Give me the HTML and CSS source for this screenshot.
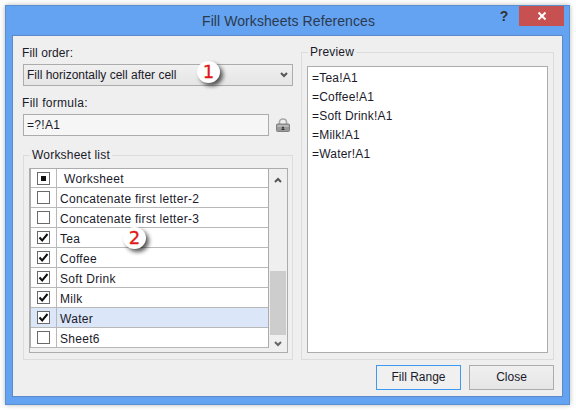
FILE: index.html
```html
<!DOCTYPE html>
<html lang="en">
<head>
<meta charset="utf-8">
<title>Fill Worksheets References</title>
<link rel="stylesheet" href="styles.css">
</head>
<body>
<div class="window">
  <div class="titlebar">
    <div class="title">Fill Worksheets References</div>
    <div class="help">?</div>
    <div class="close"><svg width="10" height="10" viewBox="0 0 10 10"><path d="M1.500 1.500 8.500 8.500M8.500 1.500 1.500 8.500" stroke="#fff" stroke-width="2" fill="none"/></svg></div>
  </div>
  <div class="client">
    <div class="columns">
      <div class="left">
        <div class="label">Fill order:</div>
        <div class="select">
          <span>Fill horizontally cell after cell</span>
          <svg class="chev" width="8" height="6" viewBox="0 0 8 6"><path d="M1 1 4 4 7 1" stroke="#555" stroke-width="2" fill="none"/></svg>
        </div>
        <div class="label formula-label">Fill formula:</div>
        <div class="formula-row">
          <div class="input">=?!A1</div>
          <svg class="lock" width="14" height="14" viewBox="0 0 14 14">
            <path d="M3.500 6.500V4.200C3.500 2.200 5 1 7 1s3.500 1.200 3.500 3.200V6.500" fill="none" stroke="#a8a8a8" stroke-width="1.600"/>
            <rect x="0.500" y="6" width="13" height="7.500" rx="1" fill="#9a9a9a" stroke="#808080"/>
            <rect x="1.500" y="7" width="11" height="2" fill="#b8b8b8"/>
            <path d="M7 8.500v3M5.500 11.500h3M5.800 9.800h2.400" stroke="#333" stroke-width="1" fill="none"/>
          </svg>
        </div>
        <fieldset class="group list-group">
          <legend>Worksheet list</legend>
          <div class="list">
            <div class="grid">
              <div class="row head">
                <div class="cell-check"><span class="box"><span class="mixed"></span></span></div>
                <div class="cell-name">Worksheet</div>
              </div>
              <div class="row">
                <div class="cell-check"><span class="box"></span></div>
                <div class="cell-name">Concatenate first letter-2</div>
              </div>
              <div class="row">
                <div class="cell-check"><span class="box"></span></div>
                <div class="cell-name">Concatenate first letter-3</div>
              </div>
              <div class="row">
                <div class="cell-check"><span class="box"><svg width="11" height="11" viewBox="0 0 11 11"><path d="M1.500 5.500 4.200 8.500 9.500 2" stroke="#111" stroke-width="2" fill="none"/></svg></span></div>
                <div class="cell-name">Tea</div>
              </div>
              <div class="row">
                <div class="cell-check"><span class="box"><svg width="11" height="11" viewBox="0 0 11 11"><path d="M1.500 5.500 4.200 8.500 9.500 2" stroke="#111" stroke-width="2" fill="none"/></svg></span></div>
                <div class="cell-name">Coffee</div>
              </div>
              <div class="row">
                <div class="cell-check"><span class="box"><svg width="11" height="11" viewBox="0 0 11 11"><path d="M1.500 5.500 4.200 8.500 9.500 2" stroke="#111" stroke-width="2" fill="none"/></svg></span></div>
                <div class="cell-name">Soft Drink</div>
              </div>
              <div class="row">
                <div class="cell-check"><span class="box"><svg width="11" height="11" viewBox="0 0 11 11"><path d="M1.500 5.500 4.200 8.500 9.500 2" stroke="#111" stroke-width="2" fill="none"/></svg></span></div>
                <div class="cell-name">Milk</div>
              </div>
              <div class="row selected">
                <div class="cell-check"><span class="box"><svg width="11" height="11" viewBox="0 0 11 11"><path d="M1.500 5.500 4.200 8.500 9.500 2" stroke="#111" stroke-width="2" fill="none"/></svg></span></div>
                <div class="cell-name">Water</div>
              </div>
              <div class="row">
                <div class="cell-check"><span class="box"></span></div>
                <div class="cell-name">Sheet6</div>
              </div>
            </div>
            <div class="scrollbar">
              <svg width="8" height="6" viewBox="0 0 8 6"><path d="M1 5 4 2 7 5" stroke="#555" stroke-width="2" fill="none"/></svg>
              <div class="track"><div class="thumb"></div></div>
              <svg width="8" height="6" viewBox="0 0 8 6"><path d="M1 1 4 4 7 1" stroke="#666" stroke-width="2" fill="none"/></svg>
            </div>
          </div>
        </fieldset>
      </div>
      <fieldset class="group preview-group">
        <legend>Preview</legend>
        <div class="preview">
          <div>=Tea!A1</div>
          <div>=Coffee!A1</div>
          <div>=Soft Drink!A1</div>
          <div>=Milk!A1</div>
          <div>=Water!A1</div>
        </div>
      </fieldset>
    </div>
    <div class="buttons">
      <div class="btn primary">Fill Range</div>
      <div class="btn">Close</div>
    </div>
    <div class="badge badge-one">1</div>
    <div class="badge badge-two">2</div>
  </div>
</div>
</body>
</html>
```
FILE: styles.css
```css
* { box-sizing: border-box; }
html, body { margin: 0; background: #fff; }
body { width: 576px; height: 410px; overflow: hidden; padding: 5px 0 0 5px; font: 12px/16px "Liberation Sans", Arial, sans-serif; color: #1a1a2a; }
.window { width: 565px; height: 400px; background: #64a2f2; border: 1px solid #5c8fd0; box-shadow: 0 0 5px rgba(0,0,0,.28); display: flex; flex-direction: column; }
.titlebar { height: 29px; position: relative; flex: none; }
.title { text-align: center; font-size: 14px; letter-spacing: .08px; line-height: 30px; padding-left: 2px; color: #2b3a4d; }
.help { position: absolute; left: 491px; top: 0; width: 14px; font-size: 14px; font-weight: 700; line-height: 20px; text-align: center; color: #333; }
.close { position: absolute; right: 5px; top: 0; width: 45px; height: 20px; background: #c75050; display: flex; align-items: center; justify-content: center; }
.client { position: relative; flex: 1; margin: 0 6px 7px 6px; background: #efefef; border: 1px solid #5c8ac8; padding: 8px 8px 0 10px; }
.columns { display: flex; gap: 8px; height: 316px; }
.left { width: 270px; display: flex; flex-direction: column; }
.label { height: 16px; line-height: 18px; margin-left: -1px; letter-spacing: .1px; }
.select { height: 22px; margin-top: 4px; border: 1px solid #acacac; background: linear-gradient(#f0f0f0, #e5e5e5); display: flex; align-items: center; justify-content: space-between; padding: 0 3px 0 3px; }
.chev { margin-right: 1px; }
.formula-label { margin-top: 8px; letter-spacing: .3px; }
.formula-row { display: flex; align-items: center; margin-top: 4px; height: 22px; }
.input { width: 246px; height: 22px; border: 1px solid #acacac; background: #f6f6f6; padding-left: 3px; line-height: 20px; letter-spacing: .3px; }
.lock { margin-left: 7px; }
.group { margin: 0; padding: 0; border: 1px solid #dcdcdc; min-width: 0; }
.group legend { margin-left: 1px; padding: 0 2px; line-height: 16px; letter-spacing: .2px; }
.list-group { margin-top: 11px; height: 213px; padding: 5px 4px 0 5px; }
.list { height: 185px; border: 1px solid #acacac; display: flex; background: #efefef; }
.grid { width: 240px; height: 179px; background: #fff; border-left: 1px solid #acacac; border-right: 1px solid #acacac; }
.row { height: 20px; display: flex; border-bottom: 1px solid #b8b8b8; }
.row.head { height: 19px; }
.row.selected { background: #dce6f9; }
.cell-check { width: 26px; flex: none; border-right: 1px solid #b8b8b8; display: flex; align-items: center; justify-content: center; }
.cell-name { flex: 1; padding-left: 3px; line-height: 22px; height: 19px; white-space: nowrap; letter-spacing: .3px; }
.head .cell-name { padding-left: 7px; line-height: 20px; height: 18px; }
.box { width: 13px; height: 13px; border: 1px solid #6a6a6a; background: #fff; display: flex; align-items: center; justify-content: center; }
.mixed { width: 5px; height: 5px; background: #111; }
.scrollbar { width: 18px; flex: none; display: flex; flex-direction: column; align-items: center; padding-top: 8px; }
.track { width: 100%; height: 150px; flex: none; display: flex; flex-direction: column; justify-content: flex-end; margin: 2px 0 6px; padding: 0 1px; }
.thumb { height: 64px; background: #cdcdcd; }
.preview-group { width: 253px; height: 316px; padding: 6px 5px 0 5px; }
.preview { height: 287px; border: 1px solid #acacac; background: #fff; padding: 2px 4px; line-height: 19px; letter-spacing: .2px; }
.buttons { display: flex; justify-content: flex-end; gap: 8px; margin-top: 5px; }
.btn { width: 85px; height: 25px; border: 1px solid #acacac; background: linear-gradient(#f0f0f0, #e5e5e5); text-align: center; line-height: 23px; }
.btn.primary { border-color: #3c9bf0; background: #f0f0f0; }
.badge { position: absolute; width: 23px; height: 22px; border-radius: 50%; background: #fff; color: #e01818; font: 18px/22px "DejaVu Sans", sans-serif; -webkit-text-stroke: .3px #e01818; text-align: center; box-shadow: 3px 3px 4px rgba(0,0,0,.65); }
.badge-one { left: 184px; top: 25px; }
.badge-two { left: 110px; top: 191px; }
```
